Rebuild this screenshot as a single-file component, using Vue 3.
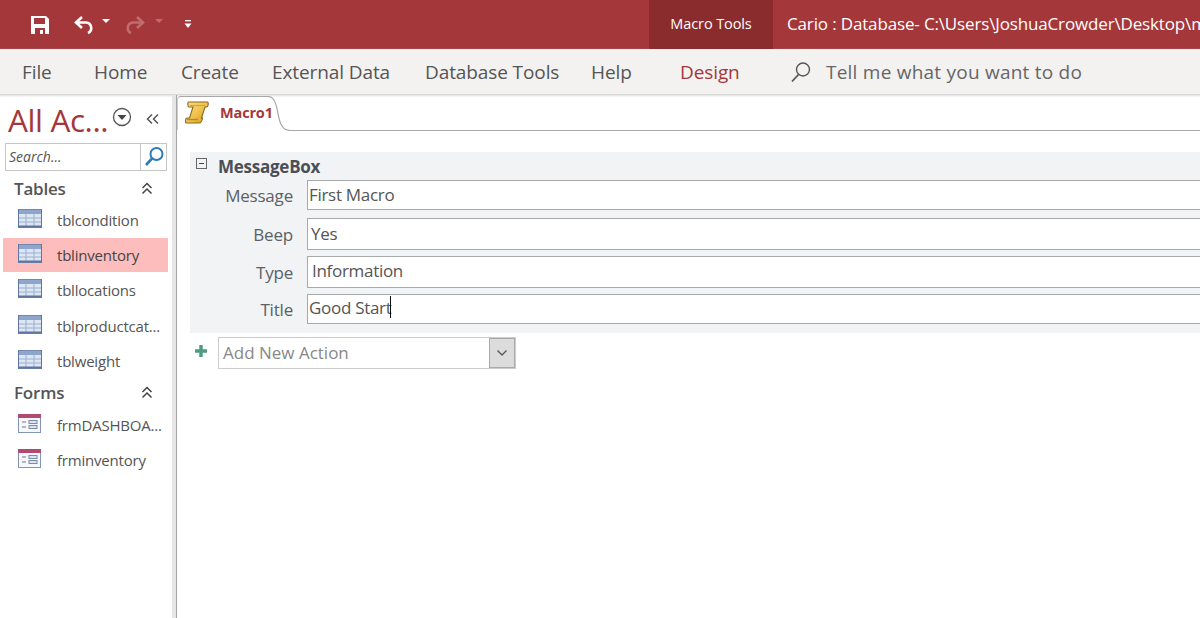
<template>
  <div class="app">
    <header class="titlebar">
      <div class="qat">
        <svg class="save" width="20" height="20" viewBox="0 0 20 20">
          <path d="M1 1h15l3 3v15H1z" fill="#fff" />
          <rect x="4" y="3" width="11" height="6" fill="#a4373a" />
          <rect x="5" y="13" width="10" height="6" fill="#a4373a" />
          <rect x="10" y="15" width="3" height="4" fill="#fff" />
        </svg>
        <svg class="undo" width="22" height="20" viewBox="0 0 22 20">
          <path d="M9 2 3 7.500 9 13M3 7.500h10a5.500 5.500 0 0 1 2 10.500" fill="none" stroke="#fff" stroke-width="2.600" />
        </svg>
        <i class="caret"></i>
        <svg class="redo" width="22" height="20" viewBox="0 0 22 20">
          <path d="M13 2l6 5.500-6 5.500M19 7.500H9a5.500 5.500 0 0 0-2 10.500" fill="none" stroke="#bf6d6f" stroke-width="2.600" />
        </svg>
        <i class="caret dim"></i>
        <svg class="more" width="8" height="9" viewBox="0 0 8 9">
          <path d="M1 .7h6" stroke="#fff" stroke-width="1.300" />
          <path d="M.5 3.500h7L4 8z" fill="#fff" />
        </svg>
      </div>
      <div class="tools-tab">Macro Tools</div>
      <div class="doc-title">Cario : Database- C:\Users\JoshuaCrowder\Desktop\macros</div>
    </header>

    <nav class="ribbon">
      <span v-for="t in tabs" :key="t.label" class="rtab" :class="{ active: t.active }" :style="{ width: t.w + 'px' }">{{ t.label }}</span>
      <svg class="lens" width="22" height="22" viewBox="0 0 22 22">
        <circle cx="13" cy="8.500" r="6.500" fill="none" stroke="#555" stroke-width="1.400" />
        <path d="M8.500 13.500 2 20.500" stroke="#555" stroke-width="1.800" />
      </svg>
      <span class="tell">Tell me what you want to do</span>
    </nav>

    <div class="body">
      <aside class="nav">
        <div class="nav-head">
          <span class="nav-title">All Ac...</span>
          <svg class="nav-menu" width="20" height="20" viewBox="0 0 20 20">
            <circle cx="10" cy="10" r="8.500" fill="none" stroke="#555" stroke-width="1.300" />
            <path d="M5.500 8h9L10 13z" fill="#444" />
          </svg>
          <svg class="nav-collapse" width="14" height="12" viewBox="0 0 14 12">
            <path d="M6 1.500 1.500 6 6 10.500M12 1.500 7.500 6l4.500 4.500" fill="none" stroke="#555" stroke-width="1.500" />
          </svg>
        </div>
        <div class="search">
          <span class="search-text">Search...</span>
          <span class="search-btn">
            <svg width="22" height="22" viewBox="0 0 22 22">
              <circle cx="13.500" cy="8" r="6" fill="none" stroke="#2f7db5" stroke-width="2" />
              <path d="M9 12.500 3 19" stroke="#2f7db5" stroke-width="2.600" />
            </svg>
          </span>
        </div>

        <template v-for="g in groups" :key="g.name">
          <div class="group" :class="{ first: g.name === 'Tables' }">
            <span>{{ g.name }}</span>
            <svg width="12" height="13" viewBox="0 0 12 13">
              <path d="M1.500 6 6 1.500 10.500 6M1.500 11.500 6 7l4.500 4.500" fill="none" stroke="#444" stroke-width="1.500" />
            </svg>
          </div>
          <div v-for="item in g.items" :key="item" class="item" :class="{ selected: item === 'tblinventory' }">
            <svg v-if="g.name === 'Tables'" class="ico" width="24" height="19" viewBox="0 0 24 19">
              <rect x=".5" y=".5" width="23" height="18" fill="#dde6f3" stroke="#7388ae" />
              <rect x="1" y="1" width="22" height="4" fill="#8fa6cc" />
              <path d="M1 9h22M1 13h22M8 5v13M16 5v13" stroke="#9db0d0" />
              <path d="M1 17.500h22" stroke="#5f759f" stroke-width="2" />
              <path d="M.5 0v19M23.500 0v19" stroke="#5f759f" />
            </svg>
            <svg v-else class="ico" width="24" height="19" viewBox="0 0 24 19">
              <rect x=".5" y=".5" width="22" height="18" fill="#f5f7fb" stroke="#8494b4" />
              <rect x="0" y="0" width="23" height="4" fill="#b24a70" />
              <path d="M4 8h4M4 13h4" stroke="#777" stroke-width="1.200" />
              <rect x="11" y="6.500" width="8" height="3" fill="#dbe3ef" stroke="#7c8ba8" />
              <rect x="11" y="11.500" width="8" height="3" fill="#dbe3ef" stroke="#7c8ba8" />
            </svg>
            <span class="item-name">{{ item }}</span>
          </div>
        </template>
      </aside>

      <div class="splitter"></div>

      <main class="main">
        <div class="tabstrip">
          <div class="tab">
            <svg class="scroll" width="24" height="23" viewBox="0 0 24 23">
              <defs>
                <linearGradient id="scrollFill" x1="0" y1="0" x2="1" y2="1">
                  <stop offset="0" stop-color="#f9e08a" />
                  <stop offset=".55" stop-color="#eec04a" />
                  <stop offset="1" stop-color="#cf9522" />
                </linearGradient>
              </defs>
              <path d="M3.500 1h19c1.200 0 1 5-1 5h-1.500l-3.500 11h1c-.3 2.500-1.500 5-3.500 5H1.500C-.3 22 .3 17 2 17h2.500L8 6H4C2.500 6 2.500 1 3.500 1z" fill="url(#scrollFill)" stroke="#8a6a1e" stroke-width="1.100" />
              <path d="M2 18.500h11" stroke="#b98a22" stroke-width="1.400" />
              <path d="M5 4.500h15" stroke="#d9a833" stroke-width="1.200" />
            </svg>
            <span>Macro1</span>
          </div>
          <svg class="tab-curve" width="22" height="35" viewBox="0 0 22 35">
            <path d="M0 .5c5 0 7 4 9 12 2 10 3 22 13 22" fill="#fff" stroke="#a8a8a8" stroke-width="1.200" />
          </svg>
          <div class="tab-rule"></div>
        </div>

        <div class="editor">
          <section class="block">
            <div class="block-head">
              <span class="minus"></span>
              <b>MessageBox</b>
            </div>
            <div v-for="f in fields" :key="f.label" class="field" :style="{ marginBottom: f.gap + 'px' }">
              <label>{{ f.label }}</label>
              <div class="value" :style="{ paddingLeft: f.pad + 'px', paddingBottom: f.lift + 'px', height: f.h + 'px' }">
                {{ f.value }}<i v-if="f.label === 'Title'" class="cursor"></i>
              </div>
            </div>
          </section>

          <div class="add-row">
            <svg class="plus" width="14" height="14" viewBox="0 0 14 14">
              <path d="M7 1v12M1 7h12" stroke="#4f9a80" stroke-width="3.400" />
            </svg>
            <div class="combo">
              <span class="combo-text">Add New Action</span>
              <span class="combo-btn">
                <svg width="12" height="8" viewBox="0 0 12 8">
                  <path d="M1.500 1.500 6 6l4.500-4.500" fill="none" stroke="#555" stroke-width="1.300" />
                </svg>
              </span>
            </div>
          </div>
        </div>
      </main>
    </div>
  </div>
</template>

<script setup>
const tabs = [
  { label: 'File', w: 72 },
  { label: 'Home', w: 87 },
  { label: 'Create', w: 91 },
  { label: 'External Data', w: 153 },
  { label: 'Database Tools', w: 166 },
  { label: 'Help', w: 90 },
  { label: 'Design', w: 111, active: true }
]

const groups = [
  { name: 'Tables', items: ['tblcondition', 'tblinventory', 'tbllocations', 'tblproductcat...', 'tblweight'] },
  { name: 'Forms', items: ['frmDASHBOA...', 'frminventory'] }
]

const fields = [
  { label: 'Message', value: 'First Macro', pad: 1, lift: 2, h: 30, gap: 8 },
  { label: 'Beep', value: 'Yes', pad: 3, lift: 2, h: 32, gap: 6 },
  { label: 'Type', value: 'Information', pad: 4, lift: 4, h: 32, gap: 6 },
  { label: 'Title', value: 'Good Start', pad: 1, lift: 4, h: 30, gap: 0 }
]
</script>

<style scoped>
.app {
  width: 1200px;
  height: 618px;
  overflow: hidden;
  background: #fff;
  font-family: "Open Sans", "Noto Sans", sans-serif;
  color: #444;
}

.titlebar {
  height: 49px;
  background: #a4373a;
  display: flex;
  align-items: center;
  color: #fff;
  padding-left: 30px;
  overflow: hidden;
}
.qat {
  width: 619px;
  flex: none;
  display: flex;
  align-items: center;
}
.undo { margin-left: 23px; }
.caret {
  width: 0;
  height: 0;
  margin: -8px 0 0 7px;
  border: 4px solid transparent;
  border-top-color: #fff;
  border-bottom: 0;
}
.caret.dim { border-top-color: #bf6d6f; margin-left: 9px; }
.redo { margin-left: 14px; }
.more { margin-left: 21px; }
.tools-tab {
  width: 124px;
  flex: none;
  height: 49px;
  line-height: 47px;
  text-align: center;
  font-size: 14.500px;
  letter-spacing: -0.100px;
  background: #8a2c2e;
}
.doc-title {
  margin: -3px 0 0 14px;
  flex: none;
  font-size: 17px;
  letter-spacing: -0.150px;
  white-space: nowrap;
}

.ribbon {
  height: 46px;
  background: #f3f2f1;
  display: flex;
  align-items: center;
  border-bottom: 1px solid #d8d8d8;
  box-sizing: border-box;
  font-size: 19px;
  letter-spacing: -0.100px;
  color: #555;
  box-shadow: 0 1px 2px #ddd;
}
.rtab {
  box-sizing: border-box;
  padding-left: 22px;
  flex: none;
  white-space: nowrap;
}
.rtab.active { color: #a4373a; padding-left: 21px; }
.lens { margin-left: 20px; }
.tell { margin-left: 14px; color: #666; letter-spacing: 0.230px; }

.body {
  display: flex;
  height: 523px;
}
.nav {
  width: 172px;
  flex: none;
  padding: 0 4px 0 3px;
  box-sizing: border-box;
}
.nav-head {
  height: 48px;
  display: flex;
  align-items: center;
  padding-left: 5px;
}
.nav-title {
  color: #a4373a;
  font-size: 31.500px;
  letter-spacing: -0.400px;
  width: 104px;
  white-space: nowrap;
  margin-top: 1px;
}
.nav-menu { margin-top: -4px; }
.nav-collapse { margin-left: 14px; margin-top: -1px; }
.search {
  margin-left: 2px;
  width: 162px;
  height: 28px;
  border: 1px solid #c6c6c6;
  box-sizing: border-box;
  display: flex;
  background: #fff;
}
.search-text {
  flex: 1;
  font-style: italic;
  font-size: 14px;
  line-height: 25px;
  padding-left: 3px;
  color: #555;
}
.search-btn {
  width: 25px;
  border-left: 1px solid #c6c6c6;
  display: flex;
  align-items: center;
  justify-content: center;
}
.group {
  height: 28px;
  display: flex;
  align-items: center;
  justify-content: space-between;
  padding: 0 15px 0 11px;
  font-size: 17px;
  font-weight: 600;
  letter-spacing: -0.200px;
  color: #555;
}
.group.first {
  height: 27px;
  padding-top: 4px;
}
.item {
  height: 35.400px;
  box-sizing: border-box;
  padding: 1px 0 1px 15px;
  display: flex;
  align-items: center;
  font-size: 15px;
  letter-spacing: -0.200px;
  color: #555;
  white-space: nowrap;
}
.item.selected {
  background: #fdbdbd;
  background-clip: padding-box;
  color: #444;
  border-top: 1px solid #fff;
  border-bottom: 1px solid #fff;
  padding: 0 0 0 15px;
}
.ico { margin-top: -3px; flex: none; }
.item-name { margin-left: 15px; }

.splitter {
  width: 5px;
  flex: none;
  background: #e6e6e6;
  border-right: 1px solid #a6a6a6;
  box-sizing: border-box;
}

.main {
  flex: 1;
  min-width: 0;
}
.tabstrip {
  display: flex;
  height: 36px;
  align-items: flex-start;
  padding-top: 1px;
  box-sizing: border-box;
}
.tab {
  width: 91px;
  height: 34px;
  flex: none;
  box-sizing: border-box;
  border-top: 1px solid #a8a8a8;
  border-left: 1px solid #ccc;
  border-top-left-radius: 4px;
  display: flex;
  align-items: center;
  padding-left: 7px;
  color: #a4373a;
  font-size: 14.500px;
  font-weight: 700;
  letter-spacing: -0.150px;
}
.scroll { margin-top: -3px; flex: none; }
.tab span { margin-left: 11px; margin-top: -3px; }
.tab-curve { flex: none; }
.tab-rule {
  flex: 1;
  height: 34px;
  border-bottom: 1px solid #a8a8a8;
  box-sizing: content-box;
}

.editor {
  padding: 21px 0 0 13px;
  width: 1060px;
}
.block {
  background: #f2f3f4;
  height: 181px;
  box-sizing: border-box;
}
.block-head {
  height: 28px;
  display: flex;
  align-items: center;
  padding-left: 6px;
}
.minus {
  width: 11px;
  height: 11px;
  box-sizing: border-box;
  border: 1px solid #666;
  background: linear-gradient(#444, #444) center / 5px 1px no-repeat;
  margin-top: -6px;
}
.block-head b {
  margin-left: 11px;
  font-size: 17px;
  font-weight: 700;
  letter-spacing: -0.250px;
  color: #4a4f57;
  margin-top: 1px;
}
.field {
  display: flex;
  align-items: center;
}
.field label {
  width: 103px;
  text-align: right;
  font-size: 17px;
  letter-spacing: -0.200px;
  color: #5b6068;
  flex: none;
}
.value {
  margin-left: 14px;
  flex: 1;
  box-sizing: border-box;
  background: #fff;
  border: 1px solid #a9a9a9;
  display: flex;
  align-items: center;
  font-size: 17px;
  letter-spacing: -0.300px;
  color: #555;
  white-space: pre;
}
.cursor {
  width: 1px;
  height: 22px;
  margin-left: -1px;
  background: #111;
}
.add-row {
  display: flex;
  align-items: center;
  padding: 4px 0 0 4px;
}
.plus { margin-top: -5px; }
.combo {
  margin-left: 10px;
  width: 298px;
  height: 32px;
  box-sizing: border-box;
  border: 1px solid #ccc;
  display: flex;
  align-items: center;
  justify-content: space-between;
  padding-left: 4px;
  color: #888;
  font-size: 17px;
  letter-spacing: 0;
}
.combo-text { margin-top: -2px; }
.combo-btn {
  width: 26px;
  height: 30px;
  box-sizing: border-box;
  border: 1px solid #aaa;
  background: #dcdcdc;
  display: flex;
  align-items: center;
  justify-content: center;
}
</style>
